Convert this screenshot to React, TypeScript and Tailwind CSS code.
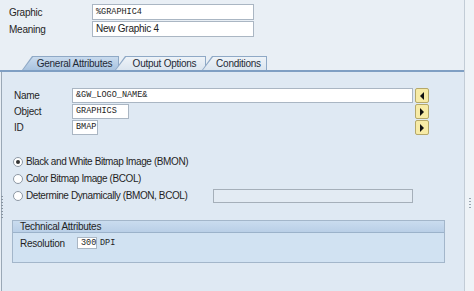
const sans = "font-['Liberation_Sans',Arial,sans-serif]";
const mono = "font-['Liberation_Mono','Courier_New',monospace]";

const Field = ({ value, width, monoText = false }: { value: string; width: string; monoText?: boolean }) => (
  <div
    className={`${width} h-full bg-white border border-[#aab6c3] flex items-center px-[3px] leading-none text-[#222] ${
      monoText ? `${mono} text-[8.5px] tracking-normal` : "text-[10px]"
    }`}
  >
    {value}
  </div>
);

const ArrowButton = ({ dir }: { dir: "left" | "right" }) => (
  <div className="w-[14px] h-full bg-[#f7eba6] border border-[#b5a86a] rounded-[2px] flex items-center justify-center">
    <svg width="6" height="8" viewBox="0 0 6 8">
      {dir === "left" ? <path d="M5 0 L1 4 L5 8 Z" fill="#111" /> : <path d="M1 0 L5 4 L1 8 Z" fill="#111" />}
    </svg>
  </div>
);

const Tab = ({ label, width, active = false }: { label: string; width: string; active?: boolean }) => (
  <div
    className={`${width} h-[14px] -mr-[4px] bg-[#8fa9c6] [clip-path:polygon(10px_0,100%_0,100%_100%,0_100%)]`}
  >
    <div
      className={`h-[13px] mt-[1px] mx-[1px] flex items-center justify-center pl-[8px] text-[10px] text-[#1e2a36] [clip-path:polygon(10px_0,100%_0,100%_100%,0_100%)] ${
        active ? "bg-gradient-to-b from-[#c9dbee] to-[#a9c3df]" : "bg-gradient-to-b from-[#eef3f8] to-[#dbe5ef]"
      }`}
    >
      {label}
    </div>
  </div>
);

const Radio = ({ label, checked = false }: { label: string; checked?: boolean }) => (
  <div className="h-[17px] flex items-center">
    <div className="w-[10px] h-[10px] rounded-full bg-white border border-[#8d98a4] flex items-center justify-center mr-[3px]">
      {checked && <div className="w-[4px] h-[4px] rounded-full bg-[#333]" />}
    </div>
    <span className="tracking-[-0.4px]">{label}</span>
  </div>
);

export default function App() {
  return (
    <div
      className={`w-[474px] h-[291px] overflow-hidden bg-[#e9eff5] flex ${sans} text-[10px] tracking-[-0.25px] text-[#1f1f1f]`}
    >
      <div className="w-[465px] flex flex-col border-r border-[#c2ccd6]">
        <div className="pt-[4px] flex flex-col gap-[1px]">
          <div className="h-[16px] flex items-center">
            <div className="w-[92px] pl-[9px]">Graphic</div>
            <Field value="%GRAPHIC4" width="w-[162px]" monoText />
          </div>
          <div className="h-[16px] flex items-center">
            <div className="w-[92px] pl-[9px]">Meaning</div>
            <Field value="New Graphic 4" width="w-[162px]" />
          </div>
        </div>

        <div className="mt-[19px] pl-[22px] flex items-end">
          <Tab label="General Attributes" width="w-[97px]" active />
          <Tab label="Output Options" width="w-[91px]" />
          <Tab label="Conditions" width="w-[65px]" />
        </div>
        <div className="h-[2px] bg-[#7f9fc3]" />

        <div className="flex-1 bg-[#dfe9f3] border-l border-[#9aa8b6] ml-[1px] relative">
          <div className="pt-[16px] flex flex-col gap-[1px]">
            <div className="h-[15px] flex items-center">
              <div className="w-[70px] pl-[12px]">Name</div>
              <Field value="&GW_LOGO_NAME&" width="w-[341px]" monoText />
              <div className="ml-[2px] h-full">
                <ArrowButton dir="left" />
              </div>
            </div>
            <div className="h-[15px] flex items-center">
              <div className="w-[70px] pl-[12px]">Object</div>
              <Field value="GRAPHICS" width="w-[57px]" monoText />
              <div className="ml-[286px] h-full">
                <ArrowButton dir="right" />
              </div>
            </div>
            <div className="h-[15px] flex items-center">
              <div className="w-[70px] pl-[12px]">ID</div>
              <Field value="BMAP" width="w-[26px]" monoText />
              <div className="ml-[317px] h-full">
                <ArrowButton dir="right" />
              </div>
            </div>
          </div>

          <div className="mt-[18px] pl-[11px] flex flex-col">
            <Radio label="Black and White Bitmap Image (BMON)" checked />
            <Radio label="Color Bitmap Image (BCOL)" />
            <div className="flex items-center">
              <Radio label="Determine Dynamically (BMON, BCOL)" />
              <div className="ml-auto mr-[51px] w-[200px] h-[14px] border border-[#a5afb9] bg-[#e3ebf3]" />
            </div>
          </div>

          <div className="mt-[16px] ml-[10px] w-[433px] h-[43px] border border-[#a3b6ca] bg-[#d1e2f2] flex flex-col">
            <div className="h-[12px] bg-gradient-to-b from-[#cadcef] to-[#b9cfe7] border-b border-[#9bb2ca] pl-[7px] flex items-center leading-none">
              Technical Attributes
            </div>
            <div className="mt-[4px] h-[12px] flex items-center pl-[7px]">
              <div className="w-[57px]">Resolution</div>
              <Field value="300" width="w-[20px]" monoText />
              <span className={`${mono} text-[8.5px] ml-[3px] tracking-normal`}>DPI</span>
            </div>
          </div>

          <div className="absolute left-[-1px] top-[124px] w-[2px] h-[22px] bg-[repeating-linear-gradient(to_bottom,#8a96a2_0,#8a96a2_1px,transparent_1px,transparent_3px)]" />
        </div>
      </div>
      <div className="flex-1 bg-[#eef3f7] flex items-start justify-center">
        <div className="mt-[198px] w-[2px] h-[12px] bg-[repeating-linear-gradient(to_bottom,#9aa5b0_0,#9aa5b0_1px,transparent_1px,transparent_3px)]" />
      </div>
    </div>
  );
}
